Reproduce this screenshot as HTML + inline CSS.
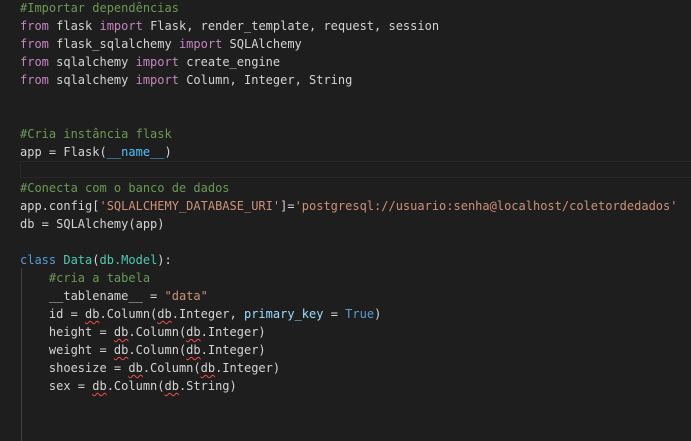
<!DOCTYPE html><html><head><style>
body{margin:0;width:691px;height:441px;background:#1e1e1e;overflow:hidden;position:relative}
pre{margin:0;position:absolute;left:20px;top:-1px;font-family:"DejaVu Sans Mono","Liberation Mono",monospace;font-size:12px;line-height:18px;color:#d4d4d4}
.c{color:#6a9955}.k{color:#c586c0}.s{color:#ce9178}.b{color:#569cd6}.t{color:#4ec9b0}.v{color:#9cdcfe}.n{color:#4fc1ff}
.w{text-decoration:underline wavy #f14c4c;text-decoration-thickness:1px;text-underline-offset:2px}
.cur{position:absolute;left:20px;top:161px;width:680px;height:15px;border:1px solid #282828}
.g{position:absolute;left:21px;top:268px;width:1px;height:173px;background:#404040}
</style></head><body>
<div class="cur"></div><div class="g"></div>
<pre><span class="c">#Importar dependências</span>
<span class="k">from</span> flask <span class="k">import</span> Flask, render_template, request, session
<span class="k">from</span> flask_sqlalchemy <span class="k">import</span> SQLAlchemy
<span class="k">from</span> sqlalchemy <span class="k">import</span> create_engine
<span class="k">from</span> sqlalchemy <span class="k">import</span> Column, Integer, String


<span class="c">#Cria instância flask</span>
app = Flask(<span class="n">__name__</span>)

<span class="c">#Conecta com o banco de dados</span>
app.config[<span class="s">'SQLALCHEMY_DATABASE_URI'</span>]=<span class="s">'postgresql://usuario:senha@localhost/coletordedados'</span>
db = SQLAlchemy(app)

<span class="b">class</span> <span class="t">Data</span>(<span class="t">db.Model</span>):
    <span class="c">#cria a tabela</span>
    __tablename__ = <span class="s">"data"</span>
    id = <span class="w">db</span>.Column(<span class="w">db</span>.Integer, <span class="v">primary_key</span> = <span class="b">True</span>)
    height = <span class="w">db</span>.Column(<span class="w">db</span>.Integer)
    weight = <span class="w">db</span>.Column(<span class="w">db</span>.Integer)
    shoesize = <span class="w">db</span>.Column(<span class="w">db</span>.Integer)
    sex = <span class="w">db</span>.Column(<span class="w">db</span>.String)
</pre></body></html>
